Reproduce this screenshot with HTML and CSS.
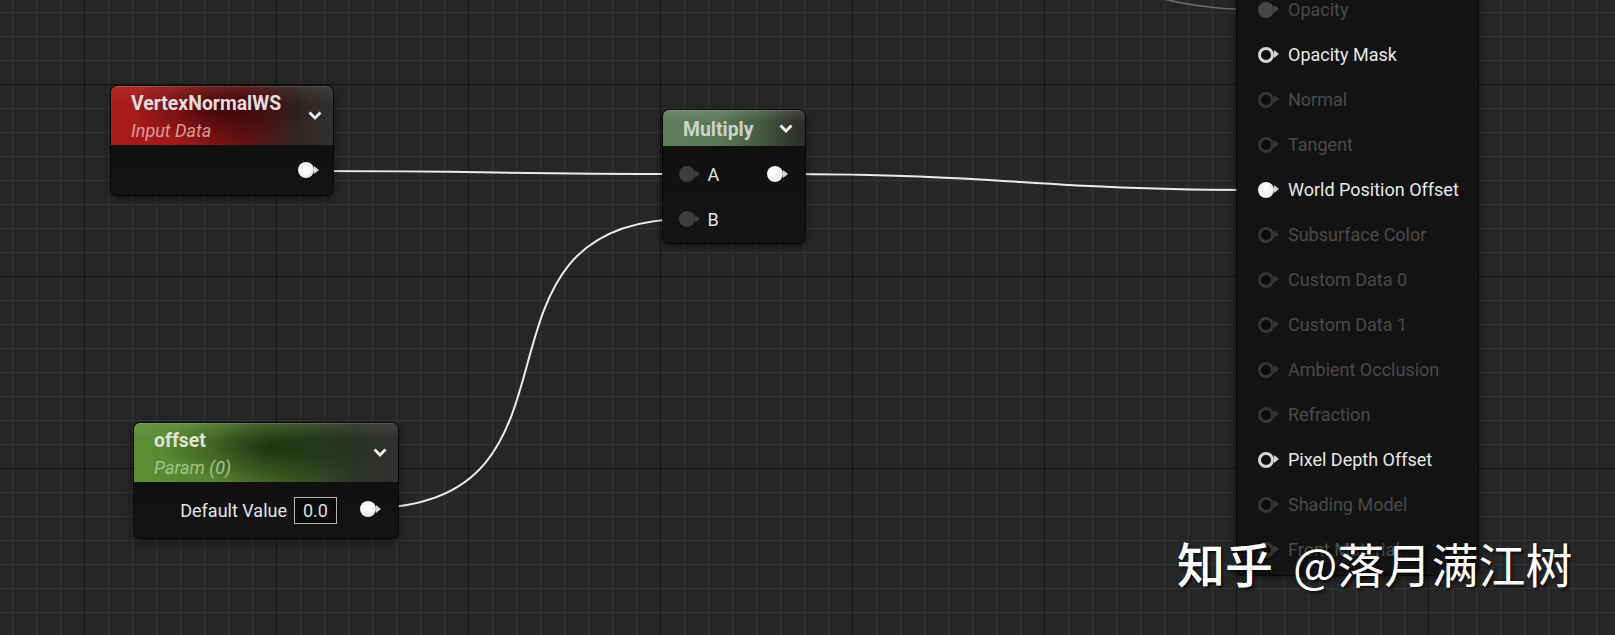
FILE: index.html
```html
<!DOCTYPE html>
<html lang="en">
<head>
<meta charset="utf-8">
<title>Material Graph</title>
<link rel="stylesheet" href="styles.css">
</head>
<body>
<div class="graph">
  <svg class="wires" width="1615" height="635" viewBox="0 0 1615 635">
    <path class="wire wire-dim" d="M 900 -80 C 1100 -80, 1066 10, 1266 10"/>
    <path class="wire" d="M 304 171 C 504 171, 487 174, 687 174"/>
    <path class="wire" d="M 368 508 C 608 508, 447 219, 687 219"/>
    <path class="wire" d="M 775 174 C 1015 174, 1026 190, 1266 190"/>
  </svg>

  <div class="node node-vn">
    <div class="node-head head-tall head-red">
      <div class="titles">
        <div class="title title-red">VertexNormalWS</div>
        <div class="subtitle sub-red">Input Data</div>
      </div>
      <svg class="chev" width="14" height="9" viewBox="0 0 14 9"><polyline points="1.5,1.5 7,7 12.5,1.5"/></svg>
    </div>
    <div class="node-body body-vn">
      <span class="pin pin-white"></span>
    </div>
  </div>

  <div class="node node-mul">
    <div class="node-head head-short head-mul">
      <div class="titles">
        <div class="title title-mul">Multiply</div>
      </div>
      <svg class="chev" width="14" height="9" viewBox="0 0 14 9"><polyline points="1.5,1.5 7,7 12.5,1.5"/></svg>
    </div>
    <div class="node-body body-mul">
      <div class="in-row"><span class="pin pin-gray"></span><span class="pin-label">A</span></div>
      <div class="out-row"><span class="pin pin-white"></span></div>
      <div class="in-row"><span class="pin pin-gray"></span><span class="pin-label">B</span></div>
    </div>
  </div>

  <div class="node node-off">
    <div class="node-head head-tall head-green">
      <div class="titles">
        <div class="title title-green">offset</div>
        <div class="subtitle sub-green">Param (0)</div>
      </div>
      <svg class="chev" width="14" height="9" viewBox="0 0 14 9"><polyline points="1.5,1.5 7,7 12.5,1.5"/></svg>
    </div>
    <div class="node-body body-off">
      <span class="field-label">Default Value</span>
      <span class="value-box">0.0</span>
      <span class="pin pin-white pin-raise"></span>
    </div>
  </div>

  <div class="panel">
    <div class="prow"><span class="pin pin-dimfill"></span><span class="plabel off">Opacity</span></div>
    <div class="prow"><span class="pin pin-ring"></span><span class="plabel">Opacity Mask</span></div>
    <div class="prow"><span class="pin pin-ringdim"></span><span class="plabel off">Normal</span></div>
    <div class="prow"><span class="pin pin-ringdim"></span><span class="plabel off">Tangent</span></div>
    <div class="prow"><span class="pin pin-white"></span><span class="plabel">World Position Offset</span></div>
    <div class="prow"><span class="pin pin-ringdim"></span><span class="plabel off">Subsurface Color</span></div>
    <div class="prow"><span class="pin pin-ringdim"></span><span class="plabel off">Custom Data 0</span></div>
    <div class="prow"><span class="pin pin-ringdim"></span><span class="plabel off">Custom Data 1</span></div>
    <div class="prow"><span class="pin pin-ringdim"></span><span class="plabel off">Ambient Occlusion</span></div>
    <div class="prow"><span class="pin pin-ringdim"></span><span class="plabel off">Refraction</span></div>
    <div class="prow"><span class="pin pin-ring"></span><span class="plabel">Pixel Depth Offset</span></div>
    <div class="prow"><span class="pin pin-ringdim"></span><span class="plabel off">Shading Model</span></div>
    <div class="prow"><span class="pin pin-ringdim"></span><span class="plabel off">Front Material</span></div>
  </div>

  <div class="watermark"><span class="wm-brand">知乎</span><span class="wm-name">@落月满江树</span></div>
</div>
</body>
</html>
```
FILE: styles.css
```css
html, body {
  margin: 0;
  padding: 0;
  width: 1615px;
  height: 635px;
  overflow: hidden;
  background: #262626;
}

.graph {
  position: relative;
  width: 1615px;
  height: 635px;
  overflow: hidden;
  font-family: Roboto, "Liberation Sans", sans-serif;
  background-color: #262626;
  background-image:
    linear-gradient(#151515 1px, transparent 1px),
    linear-gradient(90deg, #151515 1px, transparent 1px),
    linear-gradient(#343434 1px, transparent 1px),
    linear-gradient(90deg, #343434 1px, transparent 1px);
  background-size: 192px 192px, 192px 192px, 24px 24px, 24px 24px;
  background-position: 0 84px, 84px 0, 0 12px, 12px 0;
}

.wires {
  position: absolute;
  left: 0;
  top: 0;
  z-index: 1;
}

.wire {
  fill: none;
  stroke: #ececec;
  stroke-width: 2;
}

.wire-dim {
  stroke: #6e6e6e;
  stroke-width: 1.6;
}

/* ---------- nodes ---------- */
.node {
  position: absolute;
  z-index: 2;
  border-radius: 6px;
  background: #121212;
  box-shadow: 0 0 0 1px rgba(0, 0, 0, 0.75), 0 3px 8px rgba(0, 0, 0, 0.55);
  overflow: hidden;
  display: flex;
  flex-direction: column;
}

.node-vn { left: 111px; top: 86px; width: 222px; }
.node-mul { left: 663px; top: 110px; width: 142px; }
.node-off { left: 134px; top: 423px; width: 264px; }

.node-head {
  display: flex;
  align-items: center;
  justify-content: space-between;
  box-sizing: border-box;
  padding-left: 20px;
  padding-right: 11px;
  box-shadow: inset 0 1px 0 rgba(255, 255, 255, 0.14);
}

.head-tall { height: 59px; align-items: flex-start; }
.head-tall .chev { align-self: center; }
.head-tall .titles { padding-top: 6.5px; }

.head-short { height: 36px; align-items: flex-start; padding-right: 12px; }
.head-short .titles { padding-top: 8.5px; }
.head-short .chev { align-self: center; margin-top: 1px; }

.head-red {
  background:
    linear-gradient(180deg, rgba(255, 255, 255, 0.07) 0%, rgba(255, 255, 255, 0) 30%),
    radial-gradient(ellipse 42% 65% at 50% 35%, rgba(25, 0, 0, 0.6) 0%, rgba(25, 0, 0, 0) 100%),
    linear-gradient(90deg, #ab1c1c 0%, #a01919 30%, #6a1010 58%, #322424 84%, #303030 100%);
}

.head-green {
  background:
    linear-gradient(180deg, rgba(255, 255, 255, 0.07) 0%, rgba(255, 255, 255, 0) 30%),
    radial-gradient(ellipse 42% 65% at 52% 40%, rgba(0, 12, 0, 0.55) 0%, rgba(0, 12, 0, 0) 100%),
    linear-gradient(90deg, #5d8d34 0%, #568530 30%, #3c5e22 58%, #2e342a 84%, #303030 100%);
}

.head-mul {
  background:
    linear-gradient(180deg, rgba(255, 255, 255, 0.10) 0%, rgba(255, 255, 255, 0) 35%),
    linear-gradient(90deg, #5e7e5a 0%, #5a7856 40%, #45573f 70%, #31332f 92%, #2e2e2e 100%);
}

.title {
  font-weight: 700;
  font-size: 19.4px;
  line-height: 22px;
  white-space: nowrap;
}

.title-red { color: #e6dcdc; }
.title-green { color: #dde4d6; }
.title-mul { color: #cbd3ca; }

.subtitle {
  font-style: italic;
  font-size: 18px;
  line-height: 20px;
  margin-top: 6.5px;
  white-space: nowrap;
}

.sub-red { color: #d99a9a; }
.sub-green { color: #a3c487; }

.chev {
  flex: none;
}

.chev polyline {
  fill: none;
  stroke: #f2f2f2;
  stroke-width: 2.8;
  stroke-linejoin: miter;
}

.node-body {
  background: linear-gradient(180deg, #101010 0%, #141414 100%);
}

.body-vn {
  height: 50px;
  display: flex;
  align-items: center;
  justify-content: flex-end;
  padding-right: 14px;
}

.body-mul {
  display: grid;
  grid-template-columns: 1fr auto;
  grid-auto-rows: 45px;
  padding: 5.5px 17px 1.5px 16px;
}

.in-row {
  display: flex;
  align-items: center;
  gap: 7.5px;
  grid-column: 1;
}

.out-row {
  display: flex;
  align-items: center;
  grid-column: 2;
}

.pin-label {
  color: #e4e4e4;
  font-size: 18px;
}

.body-off {
  height: 56px;
  box-sizing: border-box;
  padding: 15px 17px 0 0;
  display: flex;
  align-items: flex-start;
  justify-content: flex-end;
}

.field-label {
  color: #e4e4e4;
  font-size: 18px;
  line-height: 27px;
  white-space: nowrap;
}

.value-box {
  box-sizing: border-box;
  width: 43px;
  height: 27px;
  margin-left: 7px;
  margin-right: 23px;
  border: 1px solid #b4b4b4;
  background: #0b0b0b;
  color: #dedede;
  font-size: 18px;
  line-height: 25px;
  text-align: center;
}

.pin-raise {
  align-self: flex-start;
  margin-top: 4px;
}

/* ---------- pins ---------- */
.pin {
  position: relative;
  display: inline-block;
  flex: none;
  width: 21px;
  height: 16px;
}

.pin::before {
  content: "";
  position: absolute;
  left: 0;
  top: 0;
  width: 16px;
  height: 16px;
  box-sizing: border-box;
  border-radius: 50%;
}

.pin::after {
  content: "";
  position: absolute;
  left: 16px;
  top: 3.5px;
  width: 0;
  height: 0;
  border-top: 4.5px solid transparent;
  border-bottom: 4.5px solid transparent;
  border-left: 5px solid #dcdcdc;
}

.pin-white::before {
  background: radial-gradient(circle at 40% 40%, #ffffff 0%, #f2f2f2 55%, #cfcfcf 100%);
}
.pin-white::after { border-left-color: #d6d6d6; }

.pin-gray::before { background: #3d3d3d; }
.pin-gray::after { border-left-color: #3d3d3d; }

.pin-dimfill::before { background: #474747; }
.pin-dimfill::after { border-left-color: #474747; }

.pin-ring::before {
  border: 3.5px solid #d4d4d4;
  background: #0f0f0f;
}
.pin-ring::after { border-left-color: #d4d4d4; }

.pin-ringdim::before {
  border: 3.5px solid #363636;
  background: #0c0c0c;
}
.pin-ringdim::after { border-left-color: #363636; }

/* ---------- result panel ---------- */
.panel {
  position: absolute;
  z-index: 2;
  left: 1237px;
  top: -20px;
  width: 241px;
  box-sizing: border-box;
  padding: 7px 0 3px 21px;
  background: #131313;
  border-radius: 0 0 5px 5px;
  box-shadow: 0 0 0 1px rgba(0, 0, 0, 0.6), 0 2px 10px rgba(0, 0, 0, 0.6);
}

.prow {
  height: 45px;
  display: flex;
  align-items: center;
  gap: 9px;
}

.plabel {
  font-size: 18px;
  color: #e8e8e8;
  white-space: nowrap;
}

.plabel.off { color: #4a4a4a; }

/* ---------- watermark ---------- */
.watermark {
  position: absolute;
  z-index: 3;
  left: 1177px;
  top: 534px;
  display: flex;
  align-items: baseline;
  gap: 20px;
  font-family: "Noto Sans CJK SC", "Noto Sans", sans-serif;
  font-size: 48px;
  line-height: 56px;
  color: #ffffff;
  white-space: nowrap;
  text-shadow: 2px 2px 3px rgba(0, 0, 0, 0.7);
}

.wm-brand { font-weight: 500; }
.wm-name { font-size: 47px; }
```
